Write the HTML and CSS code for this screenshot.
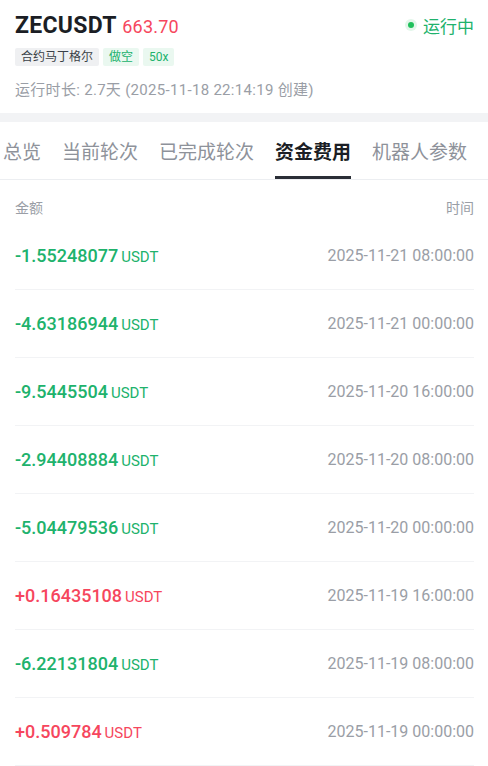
FILE: index.html
```html
<!DOCTYPE html>
<html lang="zh-CN">
<head>
  <meta charset="UTF-8" />
  <meta name="viewport" content="width=device-width, initial-scale=1.0" />
  <title>ZECUSDT 资金费用</title>
  <link rel="stylesheet" href="styles.css">
</head>
<body>
  <div class="header">
    <div class="title-row">
      <div class="symbol">ZECUSDT <span class="price">663.70</span></div>
      <div class="status"><span class="dot"></span>运行中</div>
    </div>
    <div class="tags">
      <span class="tag">合约马丁格尔</span>
      <span class="tag green">做空</span>
      <span class="tag green">50x</span>
    </div>
    <div class="runtime">运行时长: 2.7天 (2025-11-18 22:14:19 创建)</div>
  </div>

  <div class="band"></div>

  <nav class="tabs">
    <a href="#">总览</a>
    <a href="#">当前轮次</a>
    <a href="#">已完成轮次</a>
    <a href="#" class="active">资金费用</a>
    <a href="#">机器人参数</a>
  </nav>

  <div class="list-head">
    <span>金额</span>
    <span>时间</span>
  </div>

  <div class="list">
    <div class="row">
      <div class="amount down">-1.55248077<span class="unit">USDT</span></div>
      <div class="time">2025-11-21 08:00:00</div>
    </div>
    <div class="row">
      <div class="amount down">-4.63186944<span class="unit">USDT</span></div>
      <div class="time">2025-11-21 00:00:00</div>
    </div>
    <div class="row">
      <div class="amount down">-9.5445504<span class="unit">USDT</span></div>
      <div class="time">2025-11-20 16:00:00</div>
    </div>
    <div class="row">
      <div class="amount down">-2.94408884<span class="unit">USDT</span></div>
      <div class="time">2025-11-20 08:00:00</div>
    </div>
    <div class="row">
      <div class="amount down">-5.04479536<span class="unit">USDT</span></div>
      <div class="time">2025-11-20 00:00:00</div>
    </div>
    <div class="row">
      <div class="amount up">+0.16435108<span class="unit">USDT</span></div>
      <div class="time">2025-11-19 16:00:00</div>
    </div>
    <div class="row">
      <div class="amount down">-6.22131804<span class="unit">USDT</span></div>
      <div class="time">2025-11-19 08:00:00</div>
    </div>
    <div class="row">
      <div class="amount up">+0.509784<span class="unit">USDT</span></div>
      <div class="time">2025-11-19 00:00:00</div>
    </div>
  </div>
</body>
</html>
```

FILE: styles.css
```css
body {
  margin: 0;
  font-family: Roboto, "Noto Sans CJK SC", sans-serif;
  background: #fff;
  color: #1b1e25;
  overflow: hidden;
}
.header {
  padding: 12px 14px 0 15px;
}
.title-row {
  display: flex;
  justify-content: space-between;
  align-items: center;
  height: 26px;
}
.symbol {
  font-size: 23px;
  font-weight: 700;
  letter-spacing: 0.3px;
}
.price {
  font-size: 18px;
  font-weight: 400;
  color: #f6465d;
  letter-spacing: 0.2px;
}
.status {
  display: flex;
  align-items: center;
  font-size: 17px;
  color: #20b26c;
}
.dot {
  width: 6px;
  height: 6px;
  border-radius: 50%;
  background: #20c05c;
  box-shadow: 0 0 0 3px #e3f6ea;
  margin-right: 9px;
}
.tags {
  display: flex;
  gap: 4px;
  margin-top: 10px;
}
.tag {
  font-size: 12px;
  line-height: 18px;
  padding: 0 6px;
  border-radius: 2px;
  background: #eff0f2;
  color: #3a3f47;
}
.tag.green {
  background: #eaf8f0;
  color: #20b26c;
}
.runtime {
  margin-top: 14px;
  font-size: 15px;
  line-height: 20px;
  letter-spacing: 0.3px;
  color: #9a9ea6;
}
.band {
  height: 9px;
  margin-top: 13px;
  background: #f2f3f5;
}
.tabs {
  display: flex;
  gap: 21px;
  height: 57px;
  padding-left: 3px;
  border-bottom: 1px solid #eceef1;
  white-space: nowrap;
}
.tabs a {
  display: flex;
  align-items: center;
  font-size: 19px;
  color: #8e929a;
  text-decoration: none;
  position: relative;
}
.tabs a.active {
  color: #1b1e25;
  font-weight: 700;
}
.tabs a.active::after {
  content: "";
  position: absolute;
  left: 0;
  right: 0;
  bottom: 0;
  height: 3px;
  background: #2a2e36;
}
.list-head {
  display: flex;
  justify-content: space-between;
  padding: 18px 14px 4px 15px;
  font-size: 14px;
  line-height: 20px;
  color: #9a9ea6;
}
.list {
  padding: 0 14px 0 15px;
}
.row {
  display: flex;
  justify-content: space-between;
  align-items: center;
  height: 67px;
  border-bottom: 1px solid #f2f3f5;
}
.amount {
  font-size: 18px;
  font-weight: 500;
}
.amount .unit {
  font-size: 15px;
  font-weight: 400;
  margin-left: 3px;
}
.down {
  color: #20b26c;
}
.up {
  color: #f6465d;
}
.time {
  font-size: 16px;
  color: #9a9ea6;
}
```
